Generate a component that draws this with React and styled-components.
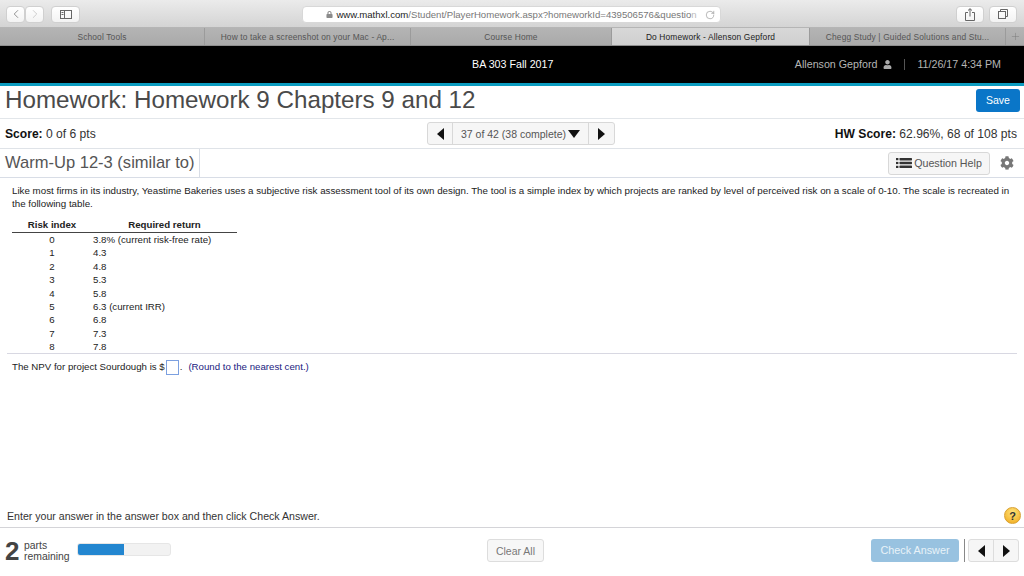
import React from "react";
import styled, { createGlobalStyle } from "styled-components";
import { ChevronLeft, ChevronRight, RotateCw, Plus } from "lucide-react";
import { FaUser, FaLock, FaCog } from "react-icons/fa";

const Global = createGlobalStyle`
  html, body { margin: 0; padding: 0; background: #fff; overflow: hidden; }
  * { box-sizing: border-box; }
`;
const Page = styled.div`
  width: 1024px; height: 576px; display: flex; flex-direction: column; overflow: hidden;
  font-family: "Liberation Sans", Arial, sans-serif; color: #222;
`;
const Toolbar = styled.div`
  height: 28px; flex: none; display: flex; align-items: center; padding: 1px 6px 0 6px;
  background: linear-gradient(#ebebeb, #d4d4d4);
  border-bottom: 1px solid #b5b5b5;
`;
const ToolGroup = styled.div`display: flex; flex: none; gap: ${p => p.$gap || 0}px; margin-right: ${p => p.$mr || 0}px;`;
const ToolBtn = styled.div`
  width: ${p => p.$w}px; height: 17px; display: flex; align-items: center; justify-content: center;
  background: linear-gradient(#fff, #f3f3f3); border: 1px solid #d0d0d0; border-radius: 4px;
  color: ${p => p.$dim ? "#bcbcbc" : "#666"};
`;
const Address = styled.div`
  width: 419px; flex: none; height: 17px; margin-right: 235px; position: relative;
  display: flex; align-items: center; justify-content: center;
  background: #fff; border: 1px solid #d8d8d8; border-radius: 4px;
  font-size: 9.6px; color: #777; white-space: nowrap; overflow: hidden;
`;
const Lock = styled(FaLock)`font-size: 7px; color: #8b8b8b; margin-right: 3px;`;
const Host = styled.span`color: #222;`;
const Faded = styled.span`color: #bbb;`;
const Reload = styled(RotateCw)`position: absolute; right: 5px; top: 3px; color: #777;`;
const Tabs = styled.div`
  height: 18px; flex: none; display: flex;
  background: linear-gradient(#b4b4b4, #aaa);
  border-bottom: 1px solid #8e8e8e;
`;
const Tab = styled.div`
  width: ${p => p.$w}px; flex: none; display: flex; align-items: center; justify-content: center;
  padding-top: 1px;
  font-size: 8.4px; letter-spacing: .15px; white-space: nowrap;
  color: ${p => p.$active ? "#222" : "#555"};
  background: ${p => p.$active ? "linear-gradient(#d8d8d8, #cfcfcf)" : "transparent"};
  border-right: 1px solid #9b9b9b;
`;
const NewTab = styled.div`flex: 1; display: flex; align-items: center; justify-content: center; color: #777;`;
const Banner = styled.div`
  height: 40px; flex: none; display: flex; align-items: center; background: #000;
  border-bottom: 3px solid #0b9cc0; padding: 0 23px 1px 472px; font-size: 10.7px;
`;
const Course = styled.div`color: #fff; width: 324px;`;
const User = styled.div`color: #b5b5b5; display: flex; align-items: center; flex: 1; white-space: nowrap;`;
const UserIcon = styled(FaUser)`font-size: 9px; margin: 0 12px 0 6px; color: #aaa;`;
const Sep = styled.span`width: 1px; height: 11px; background: #555; margin-right: 12px;`;
const TitleRow = styled.div`
  height: 33px; flex: none; display: flex; align-items: center; justify-content: space-between;
  padding: 0 4px 4px 5px; border-bottom: 1px solid #e2e6ea;
`;
const Title = styled.h1`margin: 0; font-size: 24.2px; font-weight: 400; color: #4a4a4a; line-height: 28px;`;
const Save = styled.div`
  width: 44px; height: 23px; background: #0a76c8; color: #fff; border-radius: 3px;
  font-size: 10.5px; display: flex; align-items: center; justify-content: center;
`;
const ScoreRow = styled.div`
  height: 30px; flex: none; display: grid; grid-template-columns: 422px 188px 1fr; align-items: center;
  padding: 0 7px 0 5px; border-bottom: 1px solid #dfe3e8; font-size: 12.1px; color: #333;
`;
const Strong = styled.b`color: #111;`;
const Right = styled.div`text-align: right;`;
const Pager = styled.div`
  height: 23px; display: flex; border: 1px solid #d8d8d8; border-radius: 3px; background: #f6f6f6;
`;
const PagerArrow = styled.div`
  width: ${p => p.$w}px; display: flex; align-items: center; justify-content: center;
  ${p => p.$left && "border-right: 1px solid #d8d8d8;"}
  ${p => p.$right && "border-left: 1px solid #d8d8d8;"}
`;
const PagerLabel = styled.div`
  flex: 1; display: flex; align-items: center; justify-content: center; gap: 2px; font-size: 10.5px; color: #555; white-space: nowrap;
`;
const QuestionRow = styled.div`
  height: 29px; flex: none; display: flex; align-items: stretch; justify-content: space-between;
  border-bottom: 1px solid #d8dde6; padding-right: 10px;
`;
const QTitle = styled.div`
  font-size: 16.55px; color: #555; padding: 0 4px 0 5px; display: flex; align-items: center;
  border-right: 1px solid #d8dde6; white-space: nowrap;
`;
const QTools = styled.div`display: flex; align-items: center; gap: 10px;`;
const HelpBtn = styled.div`
  width: 102px; height: 23px; display: flex; align-items: center; justify-content: center; gap: 2px;
  border: 1px solid #d8d8d8; border-radius: 3px; background: #f6f6f6; font-size: 10.7px; color: #555;
`;
const Gear = styled(FaCog)`font-size: 14px; color: #777;`;
const Content = styled.div`flex: 1; padding: 6px 7px 0 12px; font-size: 9.68px; color: #222;`;
const Para = styled.p`margin: 0; font-size: 9.75px; line-height: 13px; width: 1003px;`;
const RiskTable = styled.table`
  border-collapse: collapse; margin-top: 9px; width: 225px; table-layout: fixed;
`;
const Th = styled.th`
  font-size: 9.68px; font-weight: 700; text-align: center; padding: 0 0 2px; height: 13px; line-height: 11px;
  border-bottom: 1px solid #444; color: #222;
`;
const Td = styled.td`
  padding: 0 0 0 ${p => p.$c ? 0 : 1}px; height: 13.4px; line-height: 13.4px; white-space: nowrap;
  text-align: ${p => p.$c ? "center" : "left"};
`;
const NpvRow = styled.div`
  margin: -1px 0 0 -5px; border-top: 1px solid #d8d8e2; height: 26px; padding: 4px 0 0 5px;
  display: flex; align-items: flex-start; line-height: 17px;
`;
const AnswerBox = styled.span`
  width: 13px; height: 15px; border: 1px solid #7ca0e0; margin: 2px 1px 0 1px; flex: none;
`;
const Hint = styled.span`color: #1a1a80; margin-left: 6px;`;
const Instructions = styled.div`
  height: 29px; flex: none; display: flex; align-items: center; justify-content: space-between;
  padding: 5px 2px 0 7px; border-bottom: 1px solid #d4d4d8; font-size: 10.6px; color: #333;
`;
const HelpBadge = styled.div`
  width: 17px; height: 17px; border-radius: 50%; background: radial-gradient(circle at 50% 30%, #ffe27a, #f0a818);
  border: 1px solid #d8a030; display: flex; align-items: center; justify-content: center;
  font-size: 11px; font-weight: 700; color: #333; margin-right: 1px;
`;
const Footer = styled.div`
  height: 48px; flex: none; display: grid; grid-template-columns: 1fr auto 1fr; align-items: flex-start;
  padding: 11px 5px 0 5px;
`;
const Parts = styled.div`display: flex; align-items: center; padding-top: 1px;`;
const Big = styled.div`font-size: 26px; font-weight: 700; color: #444; line-height: 23px; width: 19px;`;
const PartsText = styled.div`font-size: 10.4px; line-height: 10.5px; color: #444; width: 53px;`;
const Bar = styled.div`
  width: 94px; height: 13px; background: #f2f2f2; border: 1px solid #e6e6e6; border-radius: 3px; overflow: hidden;
  margin-top: -4px;
`;
const BarFill = styled.div`height: 100%; background: #2386d0;`;
const ClearBtn = styled.div`
  width: 57px; height: 23px; border: 1px solid #ddd; border-radius: 3px; background: #f7f7f7; color: #777;
  font-size: 10.5px; display: flex; align-items: center; justify-content: center; margin-left: 7px;
`;
const Actions = styled.div`display: flex; justify-content: flex-end; align-items: center;`;
const CheckBtn = styled.div`
  width: 88px; height: 23px; background: #98c2e0; color: #e8f2f8; border-radius: 3px; font-size: 10.8px;
  display: flex; align-items: center; justify-content: center; padding-bottom: 1px;
`;
const Divider = styled.div`width: 1px; height: 23px; background: #888; margin: 0 3px 0 5px;`;
const NavGroup = styled.div`
  width: 51px; height: 23px; display: flex; border: 1px solid #ddd; border-radius: 3px; background: #f6f6f6;
`;
const NavBtn = styled.div`
  flex: 1; display: flex; align-items: center; justify-content: center;
  ${p => p.$first && "border-right: 1px solid #ddd;"}
`;

const rows = [
  ["0", "3.8% (current risk-free rate)"], ["1", "4.3"], ["2", "4.8"], ["3", "5.3"], ["4", "5.8"],
  ["5", "6.3 (current IRR)"], ["6", "6.8"], ["7", "7.3"], ["8", "7.8"],
];
const tabs = [
  ["School Tools", 205], ["How to take a screenshot on your Mac - Ap...", 206], ["Course Home", 201],
  ["Do Homework - Allenson Gepford", 198], ["Chegg Study | Guided Solutions and Stu...", 196],
];

const SidebarIcon = () => (
  <svg width="12" height="9" viewBox="0 0 12 9" fill="none" stroke="#666"><rect x=".5" y=".5" width="11" height="8" /><path d="M4.5 .5v8M1.5 2.5h2M1.5 4.5h2" /></svg>
);
const ShareIcon = () => (
  <svg width="10" height="13" viewBox="0 0 10 13" fill="none" stroke="#666"><path d="M3 4.5H.5v8h9v-8H7M5 8.5V.8M3 2.5 5 .7l2 1.8" /></svg>
);
const TabsIcon = () => (
  <svg width="10" height="10" viewBox="0 0 10 10" fill="none" stroke="#666"><rect x=".5" y="2.5" width="7" height="7" /><path d="M2.5 2.5v-2h7v7h-2" /></svg>
);
const LeftTri = () => <svg width="7" height="12" viewBox="0 0 7 12"><path d="M7 0v12L0 6z" fill="#111" /></svg>;
const RightTri = () => <svg width="7" height="12" viewBox="0 0 7 12"><path d="M0 0v12l7-6z" fill="#111" /></svg>;
const DownTri = () => <svg width="12" height="8" viewBox="0 0 12 8"><path d="M0 0h12L6 8z" fill="#111" /></svg>;
const ListIcon = () => (
  <svg width="16" height="12" viewBox="0 0 16 12" fill="#333">
    <rect x="0" y="1" width="2.4" height="2.2" /><rect x="0" y="4.9" width="2.4" height="2.2" /><rect x="0" y="8.8" width="2.4" height="2.2" />
    <rect x="3.5" y="1" width="12.5" height="2.4" rx=".6" /><rect x="3.5" y="4.8" width="12.5" height="2.4" rx=".6" /><rect x="3.5" y="8.6" width="12.5" height="2.4" rx=".6" />
  </svg>
);

export default function App() {
  return (
    <Page>
      <Global />
      <Toolbar>
        <ToolGroup $mr={7}>
          <ToolBtn $w={19}><ChevronLeft size={14} strokeWidth={1.2} /></ToolBtn>
          <ToolBtn $w={19} $dim><ChevronRight size={14} strokeWidth={1.2} /></ToolBtn>
        </ToolGroup>
        <ToolGroup $mr={222}><ToolBtn $w={29}><SidebarIcon /></ToolBtn></ToolGroup>
        <Address>
          <Lock /><Host>www.mathxl.com</Host>/Student/PlayerHomework.aspx?homeworkId=439506576&questio<Faded>n</Faded>
          <Reload size={10} strokeWidth={1.2} />
        </Address>
        <ToolGroup $gap={5}>
          <ToolBtn $w={28}><ShareIcon /></ToolBtn>
          <ToolBtn $w={28}><TabsIcon /></ToolBtn>
        </ToolGroup>
      </Toolbar>
      <Tabs>
        {tabs.map(([t, w]) => <Tab key={t} $w={w} $active={t.startsWith("Do")}>{t}</Tab>)}
        <NewTab><Plus size={11} strokeWidth={1} /></NewTab>
      </Tabs>
      <Banner>
        <Course>BA 303 Fall 2017</Course>
        <User>Allenson Gepford<UserIcon /><Sep />11/26/17 4:34 PM</User>
      </Banner>
      <TitleRow>
        <Title>Homework: Homework 9 Chapters 9 and 12</Title>
        <Save>Save</Save>
      </TitleRow>
      <ScoreRow>
        <div><Strong>Score:</Strong> 0 of 6 pts</div>
        <Pager>
          <PagerArrow $w={25} $left><LeftTri /></PagerArrow>
          <PagerLabel>37 of 42 (38 complete)<DownTri /></PagerLabel>
          <PagerArrow $w={26} $right><RightTri /></PagerArrow>
        </Pager>
        <Right><Strong>HW Score:</Strong> 62.96%, 68 of 108 pts</Right>
      </ScoreRow>
      <QuestionRow>
        <QTitle>Warm-Up 12-3 (similar to)</QTitle>
        <QTools>
          <HelpBtn><ListIcon />Question Help</HelpBtn>
          <Gear />
        </QTools>
      </QuestionRow>
      <Content>
        <Para>Like most firms in its industry, Yeastime Bakeries uses a subjective risk assessment tool of its own design. The tool is a simple index by which projects are ranked by level of perceived risk on a scale of 0-10. The scale is recreated in the following table.</Para>
        <RiskTable>
          <colgroup><col width="80" /><col width="145" /></colgroup>
          <thead><tr><Th>Risk index</Th><Th>Required return</Th></tr></thead>
          <tbody>
            {rows.map(([a, b]) => <tr key={a}><Td $c>{a}</Td><Td>{b}</Td></tr>)}
          </tbody>
        </RiskTable>
        <NpvRow>
          The NPV for project Sourdough is $<AnswerBox />.<Hint>(Round to the nearest cent.)</Hint>
        </NpvRow>
      </Content>
      <Instructions>
        Enter your answer in the answer box and then click Check Answer.
        <HelpBadge>?</HelpBadge>
      </Instructions>
      <Footer>
        <Parts>
          <Big>2</Big>
          <PartsText>parts remaining</PartsText>
          <Bar><BarFill style={{ width: "50%" }} /></Bar>
        </Parts>
        <ClearBtn>Clear All</ClearBtn>
        <Actions>
          <CheckBtn>Check Answer</CheckBtn>
          <Divider />
          <NavGroup>
            <NavBtn $first><LeftTri /></NavBtn>
            <NavBtn><RightTri /></NavBtn>
          </NavGroup>
        </Actions>
      </Footer>
    </Page>
  );
}
